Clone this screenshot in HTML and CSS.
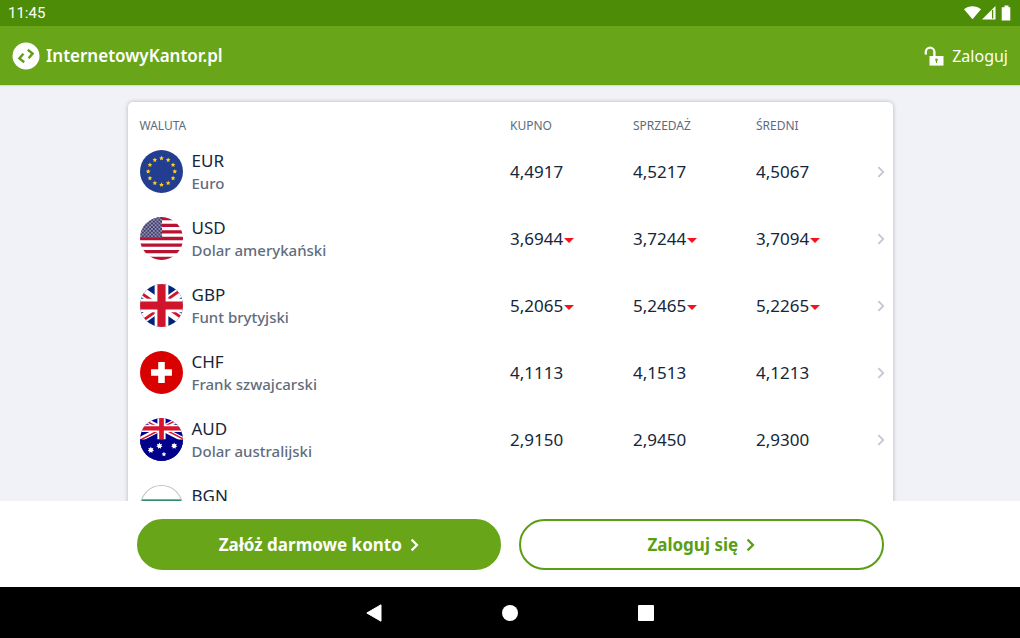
FILE: index.html
```html
<!DOCTYPE html>
<html lang="pl">
<head>
    <meta charset="UTF-8">
    <meta name="viewport" content="width=device-width, initial-scale=1.0">
    <title>InternetowyKantor.pl</title>
    <link rel="stylesheet" href="styles.css">
</head>
<body>
    <!-- shared shapes -->
    <svg class="defs" aria-hidden="true">
        <defs>
            <clipPath id="round"><circle cx="21" cy="21" r="21"/></clipPath>
            <polygon id="star" points="0,-2.4 0.7,-0.9 2.3,-0.7 1.1,0.4 1.4,2 0,1.2 -1.4,2 -1.1,0.4 -2.3,-0.7 -0.7,-0.9"/>
            <polygon id="star7" points="0,-3.2 0.8,-1.6 2.5,-2 1.8,-0.4 3.1,0.7 1.5,1.2 1.4,2.9 0,1.8 -1.4,2.9 -1.5,1.2 -3.1,0.7 -1.8,-0.4 -2.5,-2 -0.8,-1.6"/>
            <pattern id="us-stars" width="3.6" height="3.6" patternUnits="userSpaceOnUse">
                <circle cx="0.9" cy="0.9" r="0.75" fill="#fff"/>
                <circle cx="2.7" cy="2.7" r="0.75" fill="#fff"/>
            </pattern>
            <symbol id="chevron" viewBox="0 0 8 12">
                <path d="M1.4 1.2 6.2 6l-4.8 4.8" fill="none" stroke="currentColor"/>
            </symbol>
        </defs>
    </svg>

    <div class="status-bar">
        <span>11:45</span>
        <svg class="status-icons" viewBox="0 0 48 16">
            <path d="M0 4.2C4.6 0.2 12.4 0.2 17 4.2L8.5 14.2z" fill="#fff"/>
            <path d="M18 14.5 31.5 1v13.5z" fill="#fff"/>
            <path d="M28.6 5v8.5" stroke="#4c8c07" stroke-width="1.3"/>
            <path d="M40.5 0.5h4v1.7h1.8V15.5h-8.6V2.2h2.8z" fill="#fff"/>
        </svg>
    </div>

    <header class="header">
        <a href="#" class="logo">
            <svg viewBox="0 0 28 28">
                <circle cx="14" cy="14" r="13.5" fill="#fff"/>
                <g fill="none" stroke="#5f9f15" stroke-width="2.4">
                    <path d="M15.8 7.8 20.6 11.6 16.6 16.2"/>
                    <path d="M12.2 20.2 7.4 16.4 11.4 11.8"/>
                </g>
            </svg>
            <span>InternetowyKantor.pl</span>
        </a>
        <a href="#" class="login">
            <svg viewBox="0 0 20 20">
                <path d="M1.8 8.5V6a4.3 4.3 0 0 1 8.6 0v5" fill="none" stroke="#fff" stroke-width="2.3"/>
                <rect x="5.5" y="10" width="14" height="9.6" fill="#fff"/>
                <path d="M12.5 13v4" stroke="#68a518" stroke-width="1.2"/>
                <circle cx="12.5" cy="13.7" r="1.3" fill="#68a518"/>
            </svg>
            <span>Zaloguj</span>
        </a>
    </header>

    <main class="content">
        <div class="card">
            <table class="rates">
                <thead>
                    <tr>
                        <th class="col-name">Waluta</th>
                        <th class="col-rate">Kupno</th>
                        <th class="col-rate">Sprzedaż</th>
                        <th>Średni</th>
                        <th class="col-more"></th>
                    </tr>
                </thead>
                <tbody>
                    <tr>
                        <td>
                            <div class="currency">
                                <svg class="flag" viewBox="0 0 42 42">
                                    <circle cx="21" cy="21" r="21" fill="#233e90"/>
                                    <g fill="#ffd018">
                                        <use href="#star" x="21" y="8"/>
                                        <use href="#star" x="27.5" y="9.7"/>
                                        <use href="#star" x="32.3" y="14.5"/>
                                        <use href="#star" x="34" y="21"/>
                                        <use href="#star" x="32.3" y="27.5"/>
                                        <use href="#star" x="27.5" y="32.3"/>
                                        <use href="#star" x="21" y="34"/>
                                        <use href="#star" x="14.5" y="32.3"/>
                                        <use href="#star" x="9.7" y="27.5"/>
                                        <use href="#star" x="8" y="21"/>
                                        <use href="#star" x="9.7" y="14.5"/>
                                        <use href="#star" x="14.5" y="9.7"/>
                                    </g>
                                </svg>
                                <div>
                                    <div class="code">EUR</div>
                                    <div class="name">Euro</div>
                                </div>
                            </div>
                        </td>
                        <td>4,4917</td>
                        <td>4,5217</td>
                        <td>4,5067</td>
                        <td><a href="#" class="more" aria-label="EUR"><svg><use href="#chevron"/></svg></a></td>
                    </tr>
                    <tr>
                        <td>
                            <div class="currency">
                                <svg class="flag" viewBox="0 0 42 42">
                                    <g clip-path="url(#round)">
                                        <rect width="42" height="42" fill="#fff"/>
                                        <path d="M0 1.6h42M0 8.1h42M0 14.5h42M0 21h42M0 27.5h42M0 33.9h42M0 40.4h42" stroke="#b71234" stroke-width="3.2"/>
                                        <rect width="21.5" height="20" fill="#3c3b6e"/>
                                        <rect width="21.5" height="20" fill="url(#us-stars)"/>
                                    </g>
                                </svg>
                                <div>
                                    <div class="code">USD</div>
                                    <div class="name">Dolar amerykański</div>
                                </div>
                            </div>
                        </td>
                        <td><span class="down">3,6944</span></td>
                        <td><span class="down">3,7244</span></td>
                        <td><span class="down">3,7094</span></td>
                        <td><a href="#" class="more" aria-label="USD"><svg><use href="#chevron"/></svg></a></td>
                    </tr>
                    <tr>
                        <td>
                            <div class="currency">
                                <svg class="flag" viewBox="0 0 42 42">
                                    <g clip-path="url(#round)">
                                        <rect width="42" height="42" fill="#00247d"/>
                                        <path d="M-9 0 51 42M51 0-9 42" stroke="#fff" stroke-width="9.4"/>
                                        <path d="M-9 1.8 21 22.8M51 40.2 21 19.2M51-1.8 21 19.2M-9 43.8 21 22.8" stroke="#cf142b" stroke-width="2.8"/>
                                        <path d="M21 0v42M0 21h42" stroke="#fff" stroke-width="13.4"/>
                                        <path d="M21 0v42M0 21h42" stroke="#cf142b" stroke-width="8"/>
                                    </g>
                                </svg>
                                <div>
                                    <div class="code">GBP</div>
                                    <div class="name">Funt brytyjski</div>
                                </div>
                            </div>
                        </td>
                        <td><span class="down">5,2065</span></td>
                        <td><span class="down">5,2465</span></td>
                        <td><span class="down">5,2265</span></td>
                        <td><a href="#" class="more" aria-label="GBP"><svg><use href="#chevron"/></svg></a></td>
                    </tr>
                    <tr>
                        <td>
                            <div class="currency">
                                <svg class="flag" viewBox="0 0 42 42">
                                    <circle cx="21" cy="21" r="21" fill="#d90000"/>
                                    <path d="M21 10.8v20.4M10.8 21h20.4" stroke="#fff" stroke-width="6.4"/>
                                </svg>
                                <div>
                                    <div class="code">CHF</div>
                                    <div class="name">Frank szwajcarski</div>
                                </div>
                            </div>
                        </td>
                        <td>4,1113</td>
                        <td>4,1513</td>
                        <td>4,1213</td>
                        <td><a href="#" class="more" aria-label="CHF"><svg><use href="#chevron"/></svg></a></td>
                    </tr>
                    <tr>
                        <td>
                            <div class="currency">
                                <svg class="flag" viewBox="0 0 42 42">
                                    <g clip-path="url(#round)">
                                        <rect width="42" height="42" fill="#00008b"/>
                                        <path d="M0-.6 42 21M42-.6 0 21" stroke="#fff" stroke-width="4.6"/>
                                        <path d="M0 0 21 10.8M42 20.4 21 9.6M42-1.2 21 9.6M0 21.6 21 10.8" stroke="#d8152b" stroke-width="1.5"/>
                                        <path d="M21 0v21" stroke="#fff" stroke-width="8"/>
                                        <path d="M0 10.2h42" stroke="#fff" stroke-width="7"/>
                                        <path d="M21 0v21" stroke="#d8152b" stroke-width="4.6"/>
                                        <path d="M0 10.2h42" stroke="#d8152b" stroke-width="4.2"/>
                                        <rect y="21" width="42" height="21" fill="#00008b"/>
                                        <g fill="#fff">
                                            <use href="#star7" x="10.6" y="31.2"/>
                                            <use href="#star7" x="19" y="27.2"/>
                                            <use href="#star7" x="33.4" y="27.2"/>
                                            <use href="#star" x="23.4" y="35.4"/>
                                        </g>
                                    </g>
                                </svg>
                                <div>
                                    <div class="code">AUD</div>
                                    <div class="name">Dolar australijski</div>
                                </div>
                            </div>
                        </td>
                        <td>2,9150</td>
                        <td>2,9450</td>
                        <td>2,9300</td>
                        <td><a href="#" class="more" aria-label="AUD"><svg><use href="#chevron"/></svg></a></td>
                    </tr>
                    <tr>
                        <td>
                            <div class="currency">
                                <svg class="flag" viewBox="0 0 42 42">
                                    <g clip-path="url(#round)">
                                        <rect width="42" height="14" fill="#fff"/>
                                        <rect y="14" width="42" height="14" fill="#2f8f68"/>
                                        <rect y="28" width="42" height="14" fill="#d62612"/>
                                    </g>
                                    <circle cx="21" cy="21" r="20.5" fill="none" stroke="#c4c4c4"/>
                                </svg>
                                <div>
                                    <div class="code">BGN</div>
                                    <div class="name">Lew bułgarski</div>
                                </div>
                            </div>
                        </td>
                        <td></td>
                        <td></td>
                        <td></td>
                        <td></td>
                    </tr>
                </tbody>
            </table>
        </div>
    </main>

    <div class="actions">
        <div class="actions-inner">
            <button class="btn btn-primary">Załóż darmowe konto <svg><use href="#chevron"/></svg></button>
            <button class="btn btn-outline">Zaloguj się <svg><use href="#chevron"/></svg></button>
        </div>
    </div>

    <nav class="nav-bar">
        <button aria-label="Wstecz"><svg viewBox="0 0 16 18"><path d="M15 .8v16.4L.8 9z" fill="#fff" stroke="#fff" stroke-linejoin="round"/></svg></button>
        <button aria-label="Ekran główny"><svg viewBox="0 0 16 18"><circle cx="8" cy="9" r="8" fill="#fff"/></svg></button>
        <button aria-label="Ostatnie"><svg viewBox="0 0 16 18"><rect y="1" width="16" height="16" rx="1" fill="#fff"/></svg></button>
    </nav>
</body>
</html>
```
FILE: styles.css
```css
* {
    box-sizing: border-box;
}
body {
    margin: 0;
    height: 100vh;
    display: flex;
    flex-direction: column;
    font-family: "Noto Sans", "Open Sans", sans-serif;
    color: #15263b;
    background-color: #f1f2f7;
}
a {
    color: inherit;
    text-decoration: none;
}
button {
    font-family: inherit;
    border: none;
    padding: 0;
    cursor: pointer;
}
svg {
    display: block;
    flex: none;
}
.defs {
    position: absolute;
    width: 0;
    height: 0;
}

/* top bars */
.status-bar {
    flex: none;
    display: flex;
    align-items: center;
    justify-content: space-between;
    height: 26px;
    padding: 0 8px;
    background: #4c8c07;
    color: white;
    font-family: Roboto, sans-serif;
    font-size: 15px;
}
.status-icons {
    width: 48px;
    height: 16px;
}
.header {
    flex: none;
    display: flex;
    align-items: center;
    justify-content: space-between;
    height: 59px;
    padding: 0 12px;
    background: #68a518;
    color: white;
    box-shadow: 0 1px 1px rgba(0, 0, 0, 0.1);
}
.logo {
    display: flex;
    align-items: center;
    gap: 6px;
    font-size: 17px;
    line-height: 24px;
    font-weight: 600;
}
.logo svg {
    width: 28px;
    height: 28px;
}
.login {
    display: flex;
    align-items: center;
    gap: 8px;
    font-size: 16px;
    line-height: 20px;
}
.login svg {
    width: 20px;
    height: 20px;
}

/* rates list */
.content {
    flex: 1;
    min-height: 0;
    overflow-y: auto;
    scrollbar-width: none;
    padding-top: 17px;
}
.card {
    width: 75%;
    margin: auto;
    background: white;
    border-radius: 5px;
    box-shadow: 0 0 4px rgba(0, 0, 0, 0.25);
}
.rates {
    width: 100%;
    table-layout: fixed;
    border-collapse: collapse;
}
.rates th {
    height: 36px;
    padding: 12px 0 0;
    font-size: 12px;
    line-height: 24px;
    font-weight: 400;
    text-align: left;
    text-transform: uppercase;
    color: #5d6b7e;
}
.rates td {
    height: 67px;
    padding: 0;
    font-size: 17px;
}
.rates th:first-child,
.rates td:first-child {
    padding-left: 12px;
}
.col-name {
    width: 50%;
}
.col-rate {
    width: 123px;
}
.col-more {
    width: 16px;
}
.currency {
    display: flex;
    align-items: center;
    gap: 9px;
}
.flag {
    width: 43px;
    height: 43px;
}
.code {
    line-height: 23px;
}
.name {
    font-size: 15px;
    line-height: 22px;
    font-weight: 500;
    color: #5f6d7d;
}
.down::after {
    content: "";
    display: inline-block;
    margin-left: 1px;
    vertical-align: 2px;
    border: 5px solid transparent;
    border-top-color: #f5121d;
    border-bottom: none;
}
.more svg {
    width: 8px;
    height: 12px;
    color: #c3c7ce;
    stroke-width: 1.8;
}

/* bottom buttons */
.actions {
    flex: none;
    padding: 18px 0 17px;
    background: white;
}
.actions-inner {
    display: flex;
    gap: 18px;
    width: 75%;
    margin: auto;
    padding: 0 9px;
}
.btn {
    flex: 1;
    display: flex;
    align-items: center;
    justify-content: center;
    gap: 8px;
    height: 51px;
    border: 2px solid #5a9e12;
    border-radius: 26px;
    font-size: 17px;
    font-weight: 700;
}
.btn svg {
    width: 9px;
    height: 14px;
    stroke-width: 2;
}
.btn-primary {
    background: #68a518;
    border-color: #68a518;
    color: white;
}
.btn-outline {
    background: white;
    color: #5a9e12;
}

.nav-bar {
    flex: none;
    display: flex;
    align-items: center;
    justify-content: center;
    gap: 120px;
    height: 51px;
    background: black;
}
.nav-bar button {
    background: none;
}
.nav-bar svg {
    width: 16px;
    height: 18px;
}
```
